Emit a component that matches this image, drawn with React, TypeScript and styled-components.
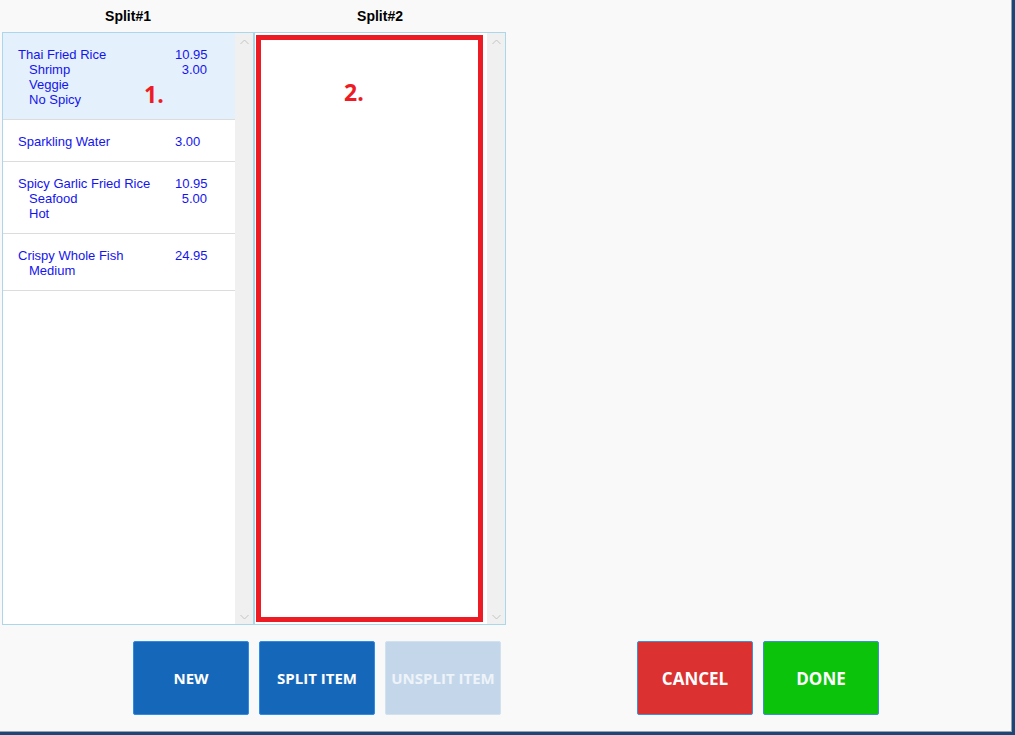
import styled, { createGlobalStyle } from 'styled-components';

interface IModifier {
  name: string;
  price?: string;
}

interface IOrderItem {
  name: string;
  price: string;
  modifiers: IModifier[];
  selected?: boolean;
}

const items: IOrderItem[] = [
  {
    name: 'Thai Fried Rice',
    price: '10.95',
    selected: true,
    modifiers: [{ name: 'Shrimp', price: '3.00' }, { name: 'Veggie' }, { name: 'No Spicy' }],
  },
  { name: 'Sparkling Water', price: '3.00', modifiers: [] },
  {
    name: 'Spicy Garlic Fried Rice',
    price: '10.95',
    modifiers: [{ name: 'Seafood', price: '5.00' }, { name: 'Hot' }],
  },
  { name: 'Crispy Whole Fish', price: '24.95', modifiers: [{ name: 'Medium' }] },
];

const GlobalStyle = createGlobalStyle`
  html, body {
    margin: 0;
    padding: 0;
    background: #f9f9f9;
  }

  * {
    box-sizing: border-box;
  }
`;

const Window = styled.div`
  width: 1015px;
  height: 735px;
  background: #f9f9f9;
  border-right: 3px solid #1c4675;
  border-bottom: 3px solid #1c4675;
  box-shadow: inset -1px -1px 0 #9aa3ad;
  padding-left: 2px;
  display: flex;
  flex-direction: column;
  font-family: 'Liberation Sans', Arial, sans-serif;
`;

const Splits = styled.div`
  display: flex;
`;

const SplitColumn = styled.div`
  display: flex;
  flex-direction: column;
  width: 252px;
`;

const SplitTitle = styled.div`
  height: 32px;
  display: flex;
  align-items: center;
  justify-content: center;
  font-size: 14px;
  font-weight: 700;
  color: #000;
  padding-bottom: 1px;
`;

const Panel = styled.div`
  position: relative;
  display: flex;
  height: 593px;
  background: #fff;
  border: 1px solid #acd6ea;
`;

const List = styled.div`
  flex: 1;
  display: flex;
  flex-direction: column;
`;

const DropFrame = styled.div`
  flex: 1;
  margin: 2px 4px 2px 1px;
  border: 5px solid #ed1c24;
`;

const Scrollbar = styled.div`
  width: 18px;
  background: #f0f0f0;
  display: flex;
  flex-direction: column;
  justify-content: space-between;
  align-items: center;
  padding: 6px 0 4px;

  svg {
    display: block;
  }
`;

const Row = styled.div<{ $selected?: boolean }>`
  padding: 14px 0 12px 15px;
  border-bottom: 1px solid #dcdcdc;
  background: ${({ $selected }) => ($selected ? '#e4f0fb' : '#fff')};
  color: #1414ee;
  font-size: 13px;
  line-height: 15px;
`;

const Line = styled.div<{ $indent?: boolean }>`
  display: grid;
  grid-template-columns: ${({ $indent }) => ($indent ? '146px 32px' : '157px 32px')};
  padding-left: ${({ $indent }) => ($indent ? '11px' : '0')};
  white-space: nowrap;
`;

const Price = styled.span<{ $right?: boolean }>`
  text-align: ${({ $right }) => ($right ? 'right' : 'left')};
`;

const Marker = styled.span<{ $left: number; $top: number }>`
  position: absolute;
  left: ${({ $left }) => $left}px;
  top: ${({ $top }) => $top}px;
  font-family: 'Open Sans', sans-serif;
  font-size: 23px;
  font-weight: 700;
  color: #ed1c24;
  line-height: 1;
`;

const Actions = styled.div`
  display: flex;
  margin-top: 16px;
  padding-left: 131px;
  gap: 10px;
`;

const ActionGap = styled.div`
  width: 116px;
`;

type Variant = 'primary' | 'disabled' | 'danger' | 'success';

const variantColors: Record<Variant, { bg: string; border: string; fg: string; size: number }> = {
  primary: { bg: '#1567b9', border: '#2f8ce6', fg: '#fff', size: 15 },
  disabled: { bg: '#c4d7ea', border: '#d2e1f0', fg: '#eef3f9', size: 15 },
  danger: { bg: '#dc3131', border: '#3e8ede', fg: '#fff', size: 17 },
  success: { bg: '#0cc30c', border: '#3e8ede', fg: '#fff', size: 17 },
};

const ActionButton = styled.button<{ $variant: Variant }>`
  width: 116px;
  height: 74px;
  border-radius: 2px;
  border: 1px solid ${({ $variant }) => variantColors[$variant].border};
  background: ${({ $variant }) => variantColors[$variant].bg};
  color: ${({ $variant }) => variantColors[$variant].fg};
  font-family: 'Open Sans', sans-serif;
  font-size: ${({ $variant }) => variantColors[$variant].size}px;
  font-weight: 700;
  white-space: nowrap;
  padding: 0;
  cursor: ${({ $variant }) => ($variant === 'disabled' ? 'default' : 'pointer')};
`;

function Chevron({ up }: { up?: boolean }) {
  return (
    <svg width="9" height="6" viewBox="0 0 9 6">
      <polyline
        points={up ? '0.5,5 4.5,1 8.5,5' : '0.5,1 4.5,5 8.5,1'}
        fill="none"
        stroke="#c4c4c4"
        strokeWidth="1"
      />
    </svg>
  );
}

function ScrollTrack() {
  return (
    <Scrollbar>
      <Chevron up />
      <Chevron />
    </Scrollbar>
  );
}

function OrderRow({ item }: { item: IOrderItem }) {
  return (
    <Row $selected={item.selected}>
      <Line>
        <span>{item.name}</span>
        <Price>{item.price}</Price>
      </Line>
      {item.modifiers.map((mod) => (
        <Line $indent key={mod.name}>
          <span>{mod.name}</span>
          <Price $right>{mod.price}</Price>
        </Line>
      ))}
    </Row>
  );
}

export default function App() {
  return (
    <>
      <GlobalStyle />
      <Window>
        <Splits>
          <SplitColumn>
            <SplitTitle>Split#1</SplitTitle>
            <Panel>
              <List>
                {items.map((item) => (
                  <OrderRow key={item.name} item={item} />
                ))}
              </List>
              <ScrollTrack />
              <Marker $left={141} $top={50}>
                1.
              </Marker>
            </Panel>
          </SplitColumn>
          <SplitColumn>
            <SplitTitle>Split#2</SplitTitle>
            <Panel>
              <DropFrame />
              <ScrollTrack />
              <Marker $left={89} $top={48}>
                2.
              </Marker>
            </Panel>
          </SplitColumn>
        </Splits>
        <Actions>
          <ActionButton $variant="primary">NEW</ActionButton>
          <ActionButton $variant="primary">SPLIT ITEM</ActionButton>
          <ActionButton $variant="disabled">UNSPLIT ITEM</ActionButton>
          <ActionGap />
          <ActionButton $variant="danger">CANCEL</ActionButton>
          <ActionButton $variant="success">DONE</ActionButton>
        </Actions>
      </Window>
    </>
  );
}
